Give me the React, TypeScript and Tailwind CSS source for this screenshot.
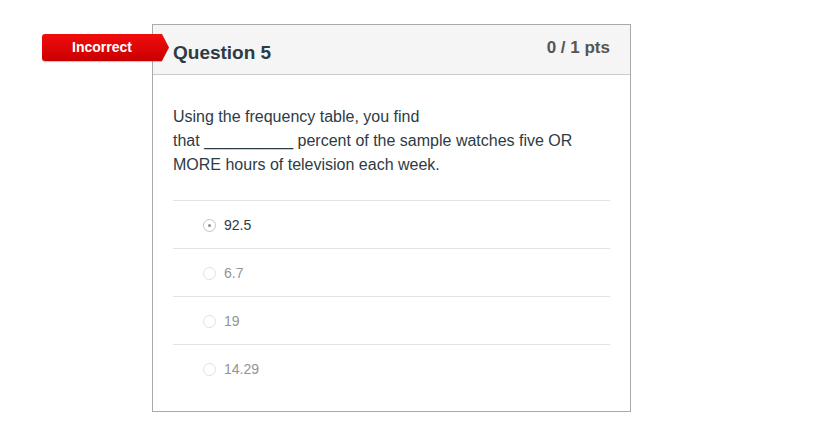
import React from 'react';

const ANSWERS = [
  { id: 'a', text: '92.5', selected: true },
  { id: 'b', text: '6.7', selected: false },
  { id: 'c', text: '19', selected: false },
  { id: 'd', text: '14.29', selected: false },
];

export default function App() {
  return (
    <div className="min-h-[429px] w-[824px] bg-white pl-[152px] pt-[24px]" style={{ fontFamily: '"Liberation Sans", Arial, sans-serif' }}>
      <div className="relative w-[479px] border border-[#a9a9a9] bg-white">
        {/* Incorrect badge */}
        <div className="absolute left-[-111px] top-[9px] flex h-[27px] items-center">
          <div className="flex h-[27px] w-[120px] items-center justify-center rounded-l-[3px] bg-gradient-to-b from-[#f20d0d] to-[#c90000] text-[14px] font-bold text-white shadow-[0_1px_1px_rgba(0,0,0,0.25)]">
            Incorrect
          </div>
          <svg width="7" height="27" viewBox="0 0 7 27" className="block">
            <defs>
              <linearGradient id="rg" x1="0" y1="0" x2="0" y2="1">
                <stop offset="0" stopColor="#f20d0d" />
                <stop offset="1" stopColor="#c90000" />
              </linearGradient>
            </defs>
            <polygon points="0,0 7,13.5 0,27" fill="url(#rg)" />
          </svg>
        </div>

        {/* Header */}
        <div className="flex h-[50px] items-start justify-between border-b border-[#c7cdd1] bg-[#f5f5f5] px-5">
          <h2 className="pt-[16px] text-[19px] font-bold leading-[23px] text-[#2d3b45]">Question 5</h2>
          <div className="pt-[13px] text-[17px] font-bold leading-[20px] text-[#555]">0 / 1 pts</div>
        </div>

        {/* Body */}
        <div className="px-5 pb-[19px] pt-[30px]">
          <p className="mb-[23px] text-[16px] leading-[24px] text-[#2d3b45]">
            Using the frequency table, you find
            <br />
            that __________ percent of the sample watches five OR
            <br />
            MORE hours of television each week.
          </p>
          <div>
            {ANSWERS.map((a) => (
              <div key={a.id} className="flex h-[48px] items-center border-t border-[#e3e3e3] pl-[30px] pt-[2px]">
                <span
                  className={`mr-[8px] flex h-[13px] w-[13px] items-center justify-center rounded-full border ${
                    a.selected ? 'border-[#c4c4c4]' : 'border-[#e2e2e2]'
                  } bg-white`}
                >
                  {a.selected && <span className="h-[3px] w-[3px] rounded-full bg-[#8e8e8e]" />}
                </span>
                <span className={`text-[14px] ${a.selected ? 'text-[#2d3b45]' : 'text-[#8e959b]'}`}>{a.text}</span>
              </div>
            ))}
          </div>
        </div>
      </div>
    </div>
  );
}
